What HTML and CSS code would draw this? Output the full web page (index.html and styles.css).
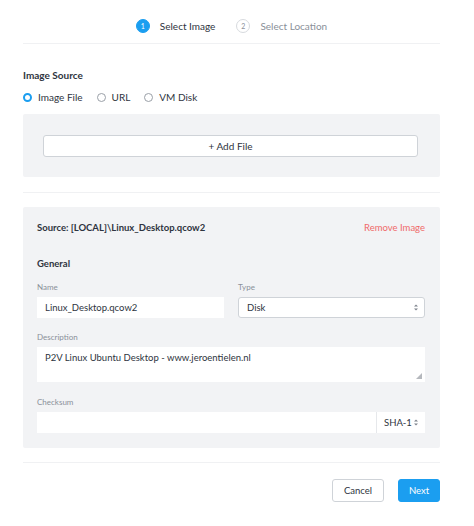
FILE: index.html
```html
<!DOCTYPE html>
<html>
<head>
<meta charset="utf-8">
<link rel="stylesheet" href="styles.css">
</head>
<body>
<div class="page">
  <div class="steps">
    <div class="step active"><span class="num">1</span><span class="label">Select Image</span></div>
    <div class="step"><span class="num">2</span><span class="label">Select Location</span></div>
  </div>

  <div class="section-title">Image Source</div>
  <div class="radios">
    <label class="radio checked"><span class="dot"></span>Image File</label>
    <label class="radio"><span class="dot"></span>URL</label>
    <label class="radio"><span class="dot"></span>VM Disk</label>
  </div>

  <div class="panel add-panel">
    <button class="add-btn">+ Add File</button>
  </div>

  <div class="divider"></div>

  <div class="panel detail">
    <div class="source-row">
      <span class="source">Source: [LOCAL]\Linux_Desktop.qcow2</span>
      <span class="remove">Remove Image</span>
    </div>
    <div class="general">General</div>
    <div class="grid2">
      <div class="field">
        <div class="flabel">Name</div>
        <div class="input">Linux_Desktop.qcow2</div>
      </div>
      <div class="field">
        <div class="flabel">Type</div>
        <div class="input select">Disk<svg class="caret" width="4" height="7" viewBox="0 0 4 7"><path d="M0 2.6 L2 0.4 L4 2.6 Z M0 4.4 L2 6.6 L4 4.4 Z" fill="#7d838c"/></svg></div>
      </div>
    </div>
    <div class="field desc">
      <div class="flabel">Description</div>
      <div class="input textarea">P2V Linux Ubuntu Desktop - www.jeroentielen.nl
        <svg class="grip" width="6" height="6" viewBox="0 0 6 6"><path d="M6 0 L6 6 L0 6 Z" fill="#b5b8bd"/></svg>
      </div>
    </div>
    <div class="field ck">
      <div class="flabel">Checksum</div>
      <div class="checksum">
        <div class="input ck-input"></div>
        <div class="ck-select">SHA-1<svg class="caret" width="4" height="7" viewBox="0 0 4 7"><path d="M0 2.6 L2 0.4 L4 2.6 Z M0 4.4 L2 6.6 L4 4.4 Z" fill="#7d838c"/></svg></div>
      </div>
    </div>
  </div>

  <div class="divider2"></div>

  <div class="actions">
    <button class="btn cancel">Cancel</button>
    <button class="btn next">Next</button>
  </div>
</div>
</body>
</html>
```
FILE: styles.css
```css
* { box-sizing: border-box; }
html, body { margin: 0; padding: 0; background: #fff; }
body {
  font-family: Lato, "Open Sans", "Liberation Sans", sans-serif;
  color: #2e3440;
  font-size: 10px;
}
.page {
  width: 474px;
  padding: 0 34px 0 23px;
}
.steps {
  height: 44px;
  border-bottom: 1px solid #f0f1f3;
  display: flex;
  justify-content: center;
  align-items: center;
  gap: 21px;
  padding-top: 9px;
}
.step { display: flex; align-items: center; gap: 10px; color: #2e3440; font-size: 10px; }
.step .num {
  width: 14px; height: 14px; border-radius: 50%;
  display: inline-flex; align-items: center; justify-content: center;
  font-size: 7px; border: 1px solid #d7dade; color: #8a9099; background: #fff;
}
.step.active .num { background: #1b9ef0; border-color: #1b9ef0; color: #fff; }
.step:not(.active) .label { color: #8a9099; }

.section-title {
  margin-top: 25px;
  font-weight: 700;
  font-size: 10px;
  line-height: 12px;
  color: #2e3440;
}
.radios {
  display: flex;
  gap: 14px;
  margin-top: 10px;
  height: 12px;
  align-items: center;
}
.radio { display: flex; align-items: center; gap: 6px; font-size: 10px; color: #2e3440; }
.radio .dot {
  width: 9px; height: 9px; border-radius: 50%;
  border: 1px solid #9aa0a8; background: #fff;
}
.radio.checked .dot { border: 2.5px solid #1b9ef0; }

.panel { background: #f2f3f5; border-radius: 2px; }
.add-panel {
  margin-top: 11px;
  height: 63px;
  padding: 21px 22px 0 20px;
}
.add-btn {
  width: 100%;
  height: 22px;
  background: #fff;
  border: 1px solid #cfd3d8;
  border-radius: 3px;
  font-family: inherit;
  font-size: 10px;
  color: #2e3440;
  padding: 0;
}
.divider { height: 1px; background: #f0f1f3; margin-top: 15px; }
.detail {
  margin-top: 14px;
  padding: 14px 15px 15px 14px;
}
.source-row { display: flex; justify-content: space-between; align-items: center; height: 12px; }
.source { font-weight: 700; font-size: 9.5px; color: #2e3440; }
.remove { color: #f06a6a; font-size: 9.5px; }
.general { margin-top: 25px; font-weight: 700; font-size: 9.5px; height: 12px; line-height: 12px; }
.grid2 { display: grid; grid-template-columns: 187px 187px; column-gap: 14px; margin-top: 12px; }
.field { display: flex; flex-direction: column; }
.flabel { font-size: 8px; color: #8a9099; height: 10px; line-height: 10px; margin-bottom: 5px; }
.input {
  height: 21px;
  background: #fff;
  display: flex;
  align-items: center;
  padding: 0 8px;
  font-size: 9.5px;
  color: #2e3440;
  position: relative;
}
.select { border: 1px solid #cfd3d8; border-radius: 3px; justify-content: space-between; padding-right: 6px; }
.caret { display: block; }
.desc { margin-top: 14px; }
.textarea {
  height: 35px;
  align-items: flex-start;
  padding-top: 5px;
}
.grip { position: absolute; right: 3px; bottom: 3px; }
.ck { margin-top: 15px; }
.checksum { display: flex; }
.ck-input { flex: 1; }
.ck-select {
  width: 49px;
  height: 21px;
  background: #fff;
  border-left: 1px solid #e6e8eb;
  display: flex;
  align-items: center;
  justify-content: space-between;
  padding: 0 7px 0 7px;
  font-size: 9.5px;
}
.divider2 { height: 1px; background: #f0f1f3; margin-top: 14px; }
.actions {
  display: flex;
  justify-content: flex-end;
  gap: 14px;
  margin-top: 16px;
}
.btn {
  height: 23px;
  border-radius: 3px;
  font-family: inherit;
  font-size: 9.5px;
  padding: 0;
}
.cancel { width: 52px; background: #fff; border: 1px solid #cfd3d8; color: #2e3440; }
.next { width: 42px; background: #1b9ef0; border: 1px solid #1b9ef0; color: #fff; }
```
